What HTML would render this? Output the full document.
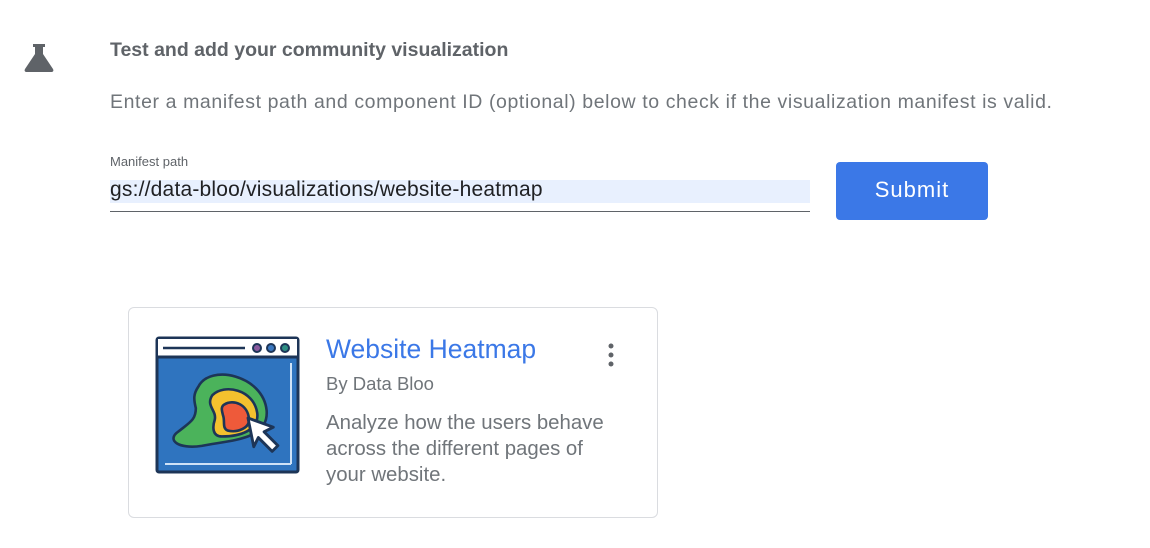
<!DOCTYPE html>
<html><head><style>
body{margin:0;width:1150px;height:548px;background:#fff;font-family:"Liberation Sans",sans-serif;position:relative;overflow:hidden}
.a{position:absolute;white-space:nowrap}
</style></head><body>
<svg class="a" style="left:24px;top:43px" width="30" height="29" viewBox="0 0 30 29"><path d="M9 1h12v3h-2v7l10 15c1 2 0 3-2 3H3c-2 0-3-1-2-3L11 11V4H9z" fill="#5f6368"/></svg>
<div class="a" style="left:110px;top:39px;font-size:19.5px;font-weight:bold;color:#5f6368">Test and add your community visualization</div>
<div class="a" style="left:110px;top:91px;font-size:19.5px;letter-spacing:0.6px;color:#70757a">Enter a manifest path and component ID (optional) below to check if the visualization manifest is valid.</div>
<div class="a" style="left:110px;top:154px;font-size:13px;color:#5f6368">Manifest path</div>
<div class="a" style="left:110px;top:180px;width:700px;height:23px;background:#e8f0fe"></div>
<div class="a" style="left:110px;top:178px;font-size:21px;letter-spacing:0.2px;color:#202124">gs://data-bloo/visualizations/website-heatmap</div>
<div class="a" style="left:110px;top:211px;width:700px;height:1px;background:#5f6368"></div>
<div class="a" style="left:836px;top:162px;width:152px;height:58px;background:#3b78e7;border-radius:4px;color:#fff;font-size:22px;letter-spacing:1px;text-align:center;line-height:56px">Submit</div>
<div class="a" style="left:128px;top:307px;width:528px;height:209px;border:1px solid #dadce0;border-radius:6px"></div>
<svg class="a" style="left:155px;top:336px" width="146" height="140" viewBox="0 0 146 140">
<rect x="2" y="2" width="141" height="134" rx="2" fill="#2f74bf" stroke="#1d3557" stroke-width="3"/>
<rect x="3" y="3" width="139" height="18" fill="#fff"/>
<line x1="2" y1="21" x2="143" y2="21" stroke="#1d3557" stroke-width="3"/>
<line x1="8" y1="12" x2="90" y2="12" stroke="#1d3557" stroke-width="2.5"/>
<circle cx="102" cy="12" r="4" fill="#8a5a9e" stroke="#1d3557" stroke-width="2"/>
<circle cx="116" cy="12" r="4" fill="#3b78c0" stroke="#1d3557" stroke-width="2"/>
<circle cx="130" cy="12" r="4" fill="#2e8f83" stroke="#1d3557" stroke-width="2"/>
<line x1="136" y1="27" x2="136" y2="128" stroke="#cfe2f7" stroke-width="2"/>
<line x1="10" y1="128" x2="136" y2="128" stroke="#cfe2f7" stroke-width="2"/>
<g transform="translate(-4,-14) scale(1.18)">
<path d="M40 55c10-20 55-10 58 20 2 25-30 25-55 30-20 3-30-5-20-12 10-8 15-10 15-20-2-8-2-12 2-18z" fill="#4bb35b" stroke="#1d3557" stroke-width="2.2"/>
<path d="M52 62c10-10 35-5 38 15 2 15-15 20-30 20-8 0-8-8-6-14 2-8-8-12-2-21z" fill="#f4c12e" stroke="#1d3557" stroke-width="2.2"/>
<path d="M62 70c8-5 20 0 21 12 1 8-10 12-18 10-5-2-2-8-4-13-1-4-2-7 1-9z" fill="#ee5a3a" stroke="#1d3557" stroke-width="2.2"/>
</g>
<g transform="translate(93,82) scale(1.15) translate(-88,-83)">
<path d="M88 83l22 8-8 4 12 12-5 5-12-12-4 8z" fill="#fff" stroke="#1d3557" stroke-width="2.5" stroke-linejoin="round"/>
</g>
</svg>
<div class="a" style="left:326px;top:334px;font-size:26.5px;color:#3b78e7">Website Heatmap</div>
<div class="a" style="left:326px;top:373px;font-size:18.5px;color:#70757a">By Data Bloo</div>
<div class="a" style="left:326px;top:410px;font-size:20.4px;color:#70757a;line-height:26px">Analyze how the users behave<br>across the different pages of<br>your website.</div>
<svg class="a" style="left:606px;top:342px" width="10" height="26"><circle cx="5" cy="4" r="2.5" fill="#5f6368"/><circle cx="5" cy="13" r="2.5" fill="#5f6368"/><circle cx="5" cy="22" r="2.5" fill="#5f6368"/></svg>
</body></html>
